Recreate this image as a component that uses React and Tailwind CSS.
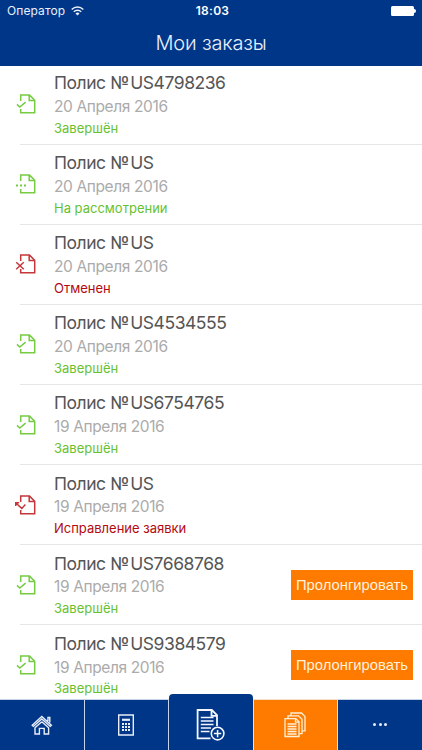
import React from "react";

const orders = [
  { id: "US4798236", date: "20 Апреля 2016", status: "Завершён", kind: "done" },
  { id: "US", date: "20 Апреля 2016", status: "На рассмотрении", kind: "pending" },
  { id: "US", date: "20 Апреля 2016", status: "Отменен", kind: "cancelled" },
  { id: "US4534555", date: "20 Апреля 2016", status: "Завершён", kind: "done" },
  { id: "US6754765", date: "19 Апреля 2016", status: "Завершён", kind: "done" },
  { id: "US", date: "19 Апреля 2016", status: "Исправление заявки", kind: "fix" },
  { id: "US7668768", date: "19 Апреля 2016", status: "Завершён", kind: "done", renew: true },
  { id: "US9384579", date: "19 Апреля 2016", status: "Завершён", kind: "done", renew: true },
];

const isRed = (kind) => kind === "cancelled" || kind === "fix";

function DocIcon({ kind }) {
  return (
    <svg width="24" height="24" viewBox="0 0 24 24" fill="none" stroke="currentColor" strokeWidth="1.5" className={isRed(kind) ? "text-[#c4373b]" : "text-[#76cb42]"}>
      <path d="M5.7 9V3.1h8.8l5.2 5.2v12.4H5.7v-3.7M14.2 3.3v5.3h5.2" />
      {kind === "done" && <path d="M2 12.4l2.8 2.6 5.8-4.8" />}
      {kind === "pending" && <path d="M1 13.6h2M5 13.6h2M9 13.6h2" strokeWidth="2" />}
      {kind === "cancelled" && <path d="M1.2 10.2l7.6 7M8.8 10.2l-7.6 7" />}
      {kind === "fix" && <path d="M.8 10l6 5.4 3.6-3.8M.7 13V9.8h3.4" />}
    </svg>
  );
}

function Order({ order, first }) {
  return (
    <li className={first ? "relative flex h-[79px] shrink-0 pl-[15px] pt-[0.3px]" : "relative flex h-[80.1px] shrink-0 pl-[15px] pt-[1.3px]"}>
      <div className="w-[39px] shrink-0 pt-[26.5px]">
        <DocIcon kind={order.kind} />
      </div>
      <div className="flex-1 whitespace-nowrap pt-[5.4px]">
        <div className="h-[23px] text-[17.5px] leading-[23px] tracking-[-0.45px] text-[#555555]">
          Полис <span className="tracking-[1px]">№</span>{order.id}
        </div>
        <div className="mt-[1.8px] h-[22px] text-[15.5px] leading-[22px] tracking-[-0.38px] text-[#ababab]">{order.date}</div>
        <div className={isRed(order.kind) ? "mt-[0.8px] h-[18px] text-[13px] leading-[18px] text-[#b3090f]" : "mt-[0.8px] h-[18px] text-[13px] leading-[18px] text-[#68c12f]"}>
          {order.status}
        </div>
      </div>
      {order.renew && (
        <button className="mr-[9px] mt-[24px] h-[30px] w-[122px] bg-[#ff7b00] font-['Liberation_Sans',sans-serif] text-[14.8px] leading-[30px] text-[#fff0dd]">
          Пролонгировать
        </button>
      )}
      <div className="absolute bottom-[-0.3px] left-[20px] right-0 h-px bg-[#e6e6e6]" />
    </li>
  );
}

const HomeIcon = () => (
  <svg width="22" height="22" viewBox="0 0 22 22" fill="none" stroke="#e8eefa" strokeWidth="1.4">
    <path d="M1.2 11.2l9.6-8.7 9.6 8.7-1.2 1.2-8.4-7.5-8.4 7.5zM4 13.4V20h4.4v-5.6h4.8V20h4.4v-6.6M10.8 7.8L4 13.7M10.8 7.8l6.8 5.9M17 7V3.4h1.8v5" />
  </svg>
);

const CalculatorIcon = () => (
  <svg width="18" height="22" viewBox="0 0 18 22" fill="none" stroke="#e8eefa" strokeWidth="1.4">
    <path d="M1.7 1h14.6v20H1.7z" />
    <path d="M5 5.8h8" strokeWidth="2.2" />
    <path d="M5 10h2M8 10h2M11 10h2M5 13h2M8 13h2M11 13h2M5 16h2M8 16h2M11 16h2" strokeWidth="2" />
  </svg>
);

const NewOrderIcon = () => (
  <svg width="30" height="34" viewBox="0 0 30 34" fill="none" stroke="#f4f7ff" strokeWidth="1.8">
    <path d="M14.5 30.4H1.6V2h14.2l5.2 5.2V18M15.5 2.4v5.4h5.2" />
    <path d="M4.8 9.5H17.5M4.8 13H17.5M4.8 16.5H17.5M4.8 20h10.2M4.8 23.5h8.7" strokeWidth="1.5" />
    <circle cx="21.6" cy="25.6" r="6.3" strokeWidth="1.6" />
    <path d="M17.9 25.6h7.4M21.6 21.9v7.4" strokeWidth="1.5" />
  </svg>
);

const OrdersIcon = () => (
  <svg width="22" height="26" viewBox="0 0 22 26" fill="none" stroke="#fff0d6" strokeWidth="1.3">
    <path d="M1 6.6h10.8L15 9.8v14.7H1zM11.5 6.8v3.4H15" />
    <path d="M4 6.2V3.8h10.5L18 7.3v14.3h-2.6M7 3.4V1h10.5L21 4.5v14.3h-2.6" />
    <path d="M3.5 12h9M3.5 14.5h9M3.5 17h9M3.5 19.5h9M3.5 22h9" />
  </svg>
);

export default function App() {
  return (
    <div className="relative flex h-[750px] w-[422px] flex-col overflow-hidden bg-white font-['Inter',sans-serif]">
      <header className="h-[65.5px] shrink-0 bg-[#003688] text-[#e9effb]">
        <div className="grid h-[21px] grid-cols-3 items-center pl-[7px] pr-[6px]">
          <div className="flex items-center gap-[6px] text-[12px] tracking-[0.1px]">
            Оператор
            <svg width="13" height="10" viewBox="0 0 13 10" fill="none" stroke="currentColor" strokeWidth="1.5">
              <path d="M.7 3.5C4 .2 9 .2 12.3 3.5M2.8 5.7c2.1-2.1 5.3-2.1 7.4 0" />
              <path d="M4.5 7.4c1.2-1.1 2.8-1.1 4 0l-2 2.2z" fill="currentColor" stroke="none" />
            </svg>
          </div>
          <div className="pl-[2px] text-center text-[12px] font-semibold tracking-[0.3px] text-white">18:03</div>
          <div className="flex items-center justify-end">
            <div className="h-[10px] w-[23px] rounded-[1.5px] bg-white" />
            <div className="ml-[0.5px] h-[4px] w-[1.5px] rounded-r bg-white" />
          </div>
        </div>
        <h1 className="text-center text-[20px] font-light leading-[44px] tracking-[-0.2px]">Мои заказы</h1>
      </header>

      <ul className="flex flex-1 flex-col overflow-hidden">
        {orders.map((order, i) => (
          <Order key={i} order={order} first={i === 0} />
        ))}
      </ul>

      <nav className="absolute bottom-0 left-0 flex h-[57px] w-full items-end">
        <div className="flex h-[51px] w-[85px] items-center justify-center border-r border-t border-[#c7d3e8] bg-[#003688] pb-px">
          <HomeIcon />
        </div>
        <div className="flex h-[51px] w-[84px] items-center justify-center border-r border-t border-[#c7d3e8] bg-[#003688] pb-px pr-px">
          <CalculatorIcon />
        </div>
        <div className="flex h-[56px] w-[84px] items-center justify-center rounded-t-[4px] bg-[#003688] pt-[5px]">
          <NewOrderIcon />
        </div>
        <div className="flex h-[51px] w-[85px] items-center justify-center border-x border-t border-[#f4dfca] bg-[#ff7b00] pb-px pr-[2px]">
          <OrdersIcon />
        </div>
        <div className="flex h-[51px] w-[84px] items-center justify-center gap-[2.5px] border-t border-[#c7d3e8] bg-[#003688] pb-[2px]">
          <span className="size-[3px] rounded-full bg-[#e8eefa]" />
          <span className="size-[3px] rounded-full bg-[#e8eefa]" />
          <span className="size-[3px] rounded-full bg-[#e8eefa]" />
        </div>
      </nav>
    </div>
  );
}
